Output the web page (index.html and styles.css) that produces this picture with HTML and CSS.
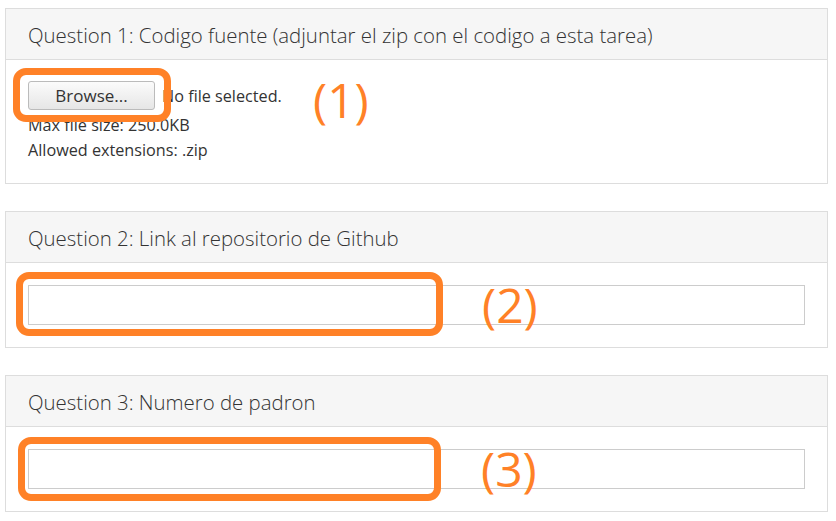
FILE: index.html
```html
<!DOCTYPE html>
<html lang="en">
<head>
<meta charset="UTF-8">
<meta name="viewport" content="width=device-width, initial-scale=1.0">
<title>Assignment questions</title>
<link rel="stylesheet" href="styles.css">
</head>
<body>

<div class="card">
    <div class="card-head">Question 1: Codigo fuente (adjuntar el zip con el codigo a esta tarea)</div>
    <div class="card-body file-body">
        <div class="file-row">
            <button class="browse-btn">Browse...</button>
            <span class="file-name">No file selected.</span>
        </div>
        <div class="note">Max file size: 250.0KB</div>
        <div class="note">Allowed extensions: .zip</div>
    </div>
    <div class="mark mark-1"></div>
    <span class="mark-label label-1">(1)</span>
</div>

<div class="card">
    <div class="card-head">Question 2: Link al repositorio de Github</div>
    <div class="card-body">
        <input type="text" class="text-input">
    </div>
    <div class="mark mark-2"></div>
    <span class="mark-label label-2">(2)</span>
</div>

<div class="card">
    <div class="card-head">Question 3: Numero de padron</div>
    <div class="card-body">
        <input type="text" class="text-input">
    </div>
    <div class="mark mark-3"></div>
    <span class="mark-label label-3">(3)</span>
</div>

</body>
</html>
```

FILE: styles.css
```css
body {
    background-color: #fff;
    color: #333;
    font-family: "Open Sans", "Noto Sans", sans-serif;
    margin: 8px 8px 0 5px;
    padding: 0;
}
.card {
    position: relative;
    border: 1px solid #ddd;
    margin-bottom: 27px;
}
.card-head {
    background-color: #f6f6f6;
    border-bottom: 1px solid #ddd;
    height: 48px;
    line-height: 48px;
    padding: 2px 0 0 22px;
    font-size: 20.4px;
    font-weight: 300;
    color: #333;
}
.card-body {
    padding: 21px 22px 22px 22px;
    font-size: 16.2px;
    line-height: 25px;
}
.file-body {
    padding-bottom: 20px;
}
.file-row {
    display: flex;
    align-items: center;
    gap: 7px;
    height: 29px;
    margin-bottom: 3px;
}
.file-name {
    padding-top: 2px;
}
.browse-btn {
    width: 127px;
    height: 29px;
    border: 1px solid #bbb;
    border-radius: 3px;
    background: linear-gradient(#fbfbfb, #e6e6e6);
    font-family: "Open Sans", "Noto Sans", sans-serif;
    font-size: 17px;
    color: #333;
    padding: 0;
}
.note {
    height: 25px;
}
.text-input {
    display: block;
    box-sizing: border-box;
    width: 777px;
    height: 40px;
    border: 1px solid #ccc;
    margin: 1px 0 0 0;
    padding: 0 8px;
}
.mark {
    position: absolute;
    border: 7px solid #ff8127;
    border-radius: 13px;
}
.mark-1 {
    left: 7px;
    top: 59px;
    width: 144px;
    height: 40px;
}
.mark-2 {
    left: 10px;
    top: 60px;
    width: 413px;
    height: 50px;
}
.mark-3 {
    left: 12px;
    top: 61px;
    width: 409px;
    height: 50px;
}
.mark-label {
    position: absolute;
    color: #ff8127;
    font-size: 48px;
    line-height: 1;
}
.label-1 {
    left: 307px;
    top: 67px;
}
.label-2 {
    left: 476px;
    top: 69px;
}
.label-3 {
    left: 475px;
    top: 69px;
}
```
